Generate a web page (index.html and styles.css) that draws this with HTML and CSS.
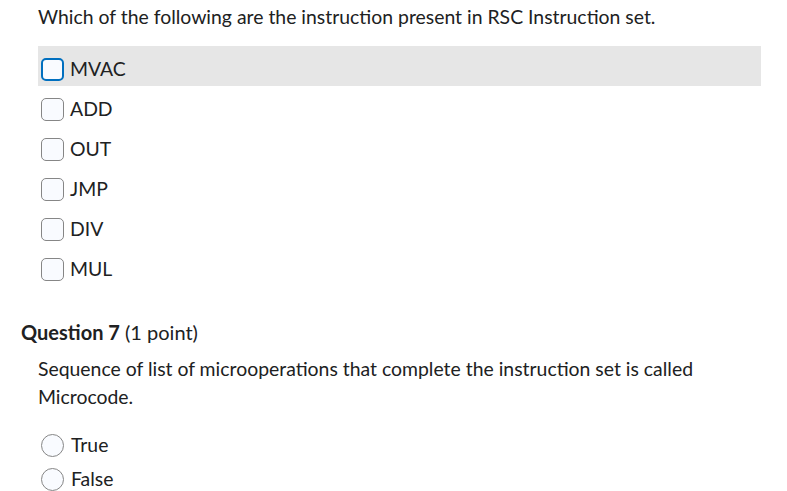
FILE: index.html
```html
<!DOCTYPE html>
<html>
<head>
<meta charset="utf-8">
<link rel="stylesheet" href="styles.css">
</head>
<body>
<div class="page">
  <section class="q q6">
    <p class="prompt">Which of the following are the instruction present in RSC Instruction set.</p>
    <ul class="choices">
      <li class="choice active"><span class="box focus"></span><span class="lbl">MVAC</span></li>
      <li class="choice"><span class="box"></span><span class="lbl">ADD</span></li>
      <li class="choice"><span class="box"></span><span class="lbl">OUT</span></li>
      <li class="choice"><span class="box"></span><span class="lbl">JMP</span></li>
      <li class="choice"><span class="box"></span><span class="lbl">DIV</span></li>
      <li class="choice"><span class="box"></span><span class="lbl">MUL</span></li>
    </ul>
  </section>
  <section class="q q7">
    <h2 class="qtitle"><strong>Question 7</strong> (1 point)</h2>
    <p class="prompt body">Sequence of list of microoperations that complete the instruction set is called Microcode.</p>
    <ul class="radios">
      <li class="radio"><span class="circle"></span><span class="lbl">True</span></li>
      <li class="radio"><span class="circle"></span><span class="lbl">False</span></li>
    </ul>
  </section>
</div>
</body>
</html>
```
FILE: styles.css
```css
* { box-sizing: border-box; }
html, body { margin: 0; padding: 0; background: #fff; }
body {
  font-family: Lato, "Open Sans", sans-serif;
  color: #202122;
  font-size: 19.4px;
}
.page { padding: 0 26px 0 21px; width: 787px; }
.q6 { padding-left: 17px; }
.prompt { margin: 0; line-height: 28px; padding-top: 3px; }
.choices, .radios { list-style: none; margin: 0; padding: 0; }
.choices { margin-top: 15px; }
.choice {
  height: 40px;
  display: flex;
  align-items: center;
  padding-left: 3px;
  padding-top: 6px;
}
.choice.active { background: #e6e6e6; }
.box {
  width: 23px; height: 23px;
  border: 1px solid #868686;
  border-radius: 5px;
  background: #f9fbff;
  margin-right: 6px;
  flex: none;
}
.box.focus { border: 2px solid #006fbf; }
.lbl { line-height: 22px; }
.qtitle {
  margin: 33px 0 0 0;
  font-size: 20px;
  font-weight: normal;
  line-height: 26px;
}
.qtitle strong { font-weight: bold; }
.q7 .body { padding-left: 17px; padding-top: 10px; width: 720px; }
.radios { margin-top: 17px; padding-left: 20px; }
.radio { height: 34px; display: flex; align-items: center; }
.circle {
  width: 23px; height: 23px;
  border: 1px solid #868686;
  border-radius: 50%;
  background: #f9fbff;
  margin-right: 7px;
  flex: none;
}
```
